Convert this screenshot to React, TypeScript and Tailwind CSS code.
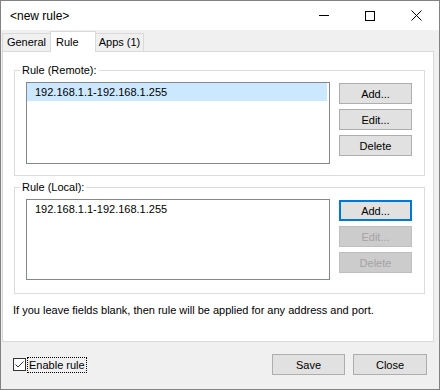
import React from "react";

const font = { fontFamily: '"Liberation Sans", Arial, sans-serif' };

function WinButton({ label, focused, disabled, width = "w-[73px]" }: { label: string; focused?: boolean; disabled?: boolean; width?: string }) {
    let cls = "bg-[#e1e1e1] border border-[#adadad] text-black";
    if (focused) cls = "bg-[#e1e1e1] border-2 border-[#0078d7] text-black";
    if (disabled) cls = "bg-[#cccccc] border border-[#bfbfbf] text-[#a3a3a3]";
    return (
        <div className={`${width} h-[21px] flex items-center justify-center text-[11px] leading-[14px] ${cls}`}>
            {label}
        </div>
    );
}

function RuleGroup({ title, selected, disabled, listHeight, bottomPad, topMargin }: { title: string; selected: boolean; disabled: boolean; listHeight: string; bottomPad: string; topMargin: string }) {
    return (
        <fieldset className={`ml-[11px] w-[411px] border border-[#dcdcdc] ${topMargin} ${bottomPad}`}>
            <legend className="ml-[5px] px-[2px] text-[11px] leading-[14px] text-black">{title}</legend>
            <div className="flex items-start ml-[11px] mt-[5px]">
                {/* list box */}
                <div className={`w-[304px] ${listHeight} border border-[#828790] bg-white`}>
                    <div className={`h-[18px] mr-[2px] pl-[8px] flex items-center text-[11px] text-black ${selected ? "bg-[#cce8ff]" : ""}`}>
                        192.168.1.1-192.168.1.255
                    </div>
                </div>
                <div className="ml-[9px] mt-[1px] flex flex-col gap-[5px]">
                    <WinButton label="Add..." focused={disabled} />
                    <WinButton label="Edit..." disabled={disabled} />
                    <WinButton label="Delete" disabled={disabled} />
                </div>
            </div>
        </fieldset>
    );
}

function App() {
    return (
        <div className="w-[440px] h-[390px] flex flex-col bg-[#f0f0f0] border border-[#828282] overflow-hidden" style={font}>
            {/* title bar */}
            <div className="h-[29px] bg-white flex items-center">
                <span className="pl-[9px] text-[12px] text-black flex-1">&lt;new rule&gt;</span>
                <div className="w-[46px] h-full flex items-center justify-center">
                    <div className="w-[10px] h-px bg-black"></div>
                </div>
                <div className="w-[46px] h-full flex items-center justify-center">
                    <div className="w-[10px] h-[10px] border border-black"></div>
                </div>
                <div className="w-[46px] h-full flex items-center justify-center">
                    <svg width="11" height="11" viewBox="0 0 11 11">
                        <path d="M0.5 0.5 L10.5 10.5 M10.5 0.5 L0.5 10.5" stroke="#000" strokeWidth="1" fill="none" />
                    </svg>
                </div>
            </div>

            {/* tabs */}
            <div className="h-[21px] flex items-end pl-[1px] text-[11px] text-black">
                <div className="w-[49px] h-[18px] border border-b-0 border-[#d9d9d9] bg-[#f0f0f0] flex items-center justify-center">General</div>
                <div className="w-[46px] h-[21px] -mb-px -ml-px relative z-10 border border-b-0 border-[#d9d9d9] bg-white flex items-start justify-start pl-[5px] pt-[2px]">Rule</div>
                <div className="w-[49px] h-[18px] -ml-px border border-b-0 border-[#d9d9d9] bg-[#f0f0f0] flex items-center justify-center">Apps (1)</div>
            </div>

            {/* tab page */}
            <div className="ml-[1px] w-[432px] h-[291px] border border-[#d9d9d9] bg-white pt-[11px]">
                <RuleGroup title="Rule (Remote):" selected={true} disabled={false} listHeight="h-[82px]" bottomPad="pb-[11px]" topMargin="mt-0" />
                <RuleGroup title="Rule (Local):" selected={false} disabled={true} listHeight="h-[81px]" bottomPad="pb-[13px]" topMargin="mt-[4px]" />
                <p className="ml-[10px] mt-[9px] text-[11px] leading-[14px] text-black">
                    If you leave fields blank, then rule will be applied for any address and port.
                </p>
            </div>

            {/* footer */}
            <div className="flex-1 flex items-start pt-[12px] pr-[12px]">
                <div className="flex items-center h-[21px] ml-[12px] flex-1">
                    <div className="w-[13px] h-[13px] border border-[#333333] bg-white flex items-center justify-center">
                        <svg width="11" height="11" viewBox="0 0 11 11">
                            <polyline points="1.5,5.5 4,8 9.5,2.5" stroke="#333" strokeWidth="1" fill="none" />
                        </svg>
                    </div>
                    <span className="ml-[1px] px-[1px] border border-dotted border-black text-[11px] leading-[14px] text-black">Enable rule</span>
                </div>
                <div className="flex gap-[8px]">
                    <WinButton label="Save" />
                    <WinButton label="Close" width="w-[74px]" />
                </div>
            </div>
        </div>
    );
}

export default App;
